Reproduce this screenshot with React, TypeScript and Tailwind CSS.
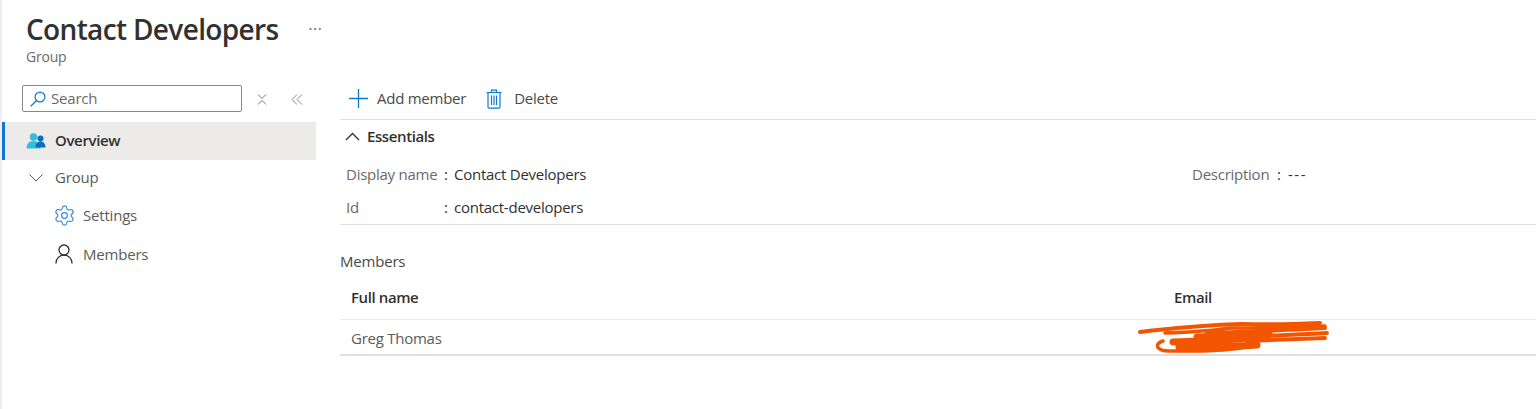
import { Ellipsis, Settings, UserRound } from "lucide-react";

const font = { fontFamily: '"Open Sans", "Noto Sans", sans-serif' };

function GroupIcon() {
  return (
    <svg width="20" height="18" viewBox="0 0 20 18">
      <circle cx="7.5" cy="5" r="3.8" fill="#32bedd" />
      <path d="M0.5 16.500c0-4.500 2.500-7.500 7-7.500s7 3 7 7.500z" fill="#32bedd" />
      <circle cx="14.500" cy="6.500" r="3" fill="#0f6cbd" />
      <path d="M9.500 15.500c0-3.500 1.800-6 5-6s5 2.500 5 6z" fill="#0f6cbd" />
    </svg>
  );
}

function SearchIcon() {
  return (
    <svg width="16" height="16" viewBox="0 0 16 16" fill="none" stroke="#0f78d4" strokeWidth="1.200">
      <circle cx="10" cy="6" r="4.900" />
      <path d="M6.500 9.500 1 15" strokeLinecap="round" />
    </svg>
  );
}

function CollapseIcon() {
  return (
    <svg width="10" height="13" viewBox="0 0 10 13" fill="none" stroke="#797775" strokeWidth="1">
      <path d="M1 1.500 5 5.500l4-4M1 11.500 5 7.500l4 4" />
    </svg>
  );
}

function DoubleLeftIcon() {
  return (
    <svg width="12" height="11" viewBox="0 0 12 11" fill="none" stroke="#8a8886" strokeWidth="1">
      <path d="M6 .5 1 5.500l5 5M11 .5 6 5.500l5 5" />
    </svg>
  );
}

function PlusIcon() {
  return (
    <svg width="19" height="19" viewBox="0 0 19 19" fill="none" stroke="#0f78d4" strokeWidth="1.300">
      <path d="M9.500 0v19M0 9.500h19" />
    </svg>
  );
}

function TrashIcon() {
  return (
    <svg width="16" height="20" viewBox="0 0 16 20" fill="none" stroke="#0f78d4" strokeWidth="1.200">
      <path d="M.5 3.500h15M5.500 3.500V1.200h5v2.300M2 3.500v14.500a1.200 1.200 0 0 0 1.200 1.200h9.600a1.200 1.200 0 0 0 1.200-1.200V3.500" />
      <path d="M5.500 6.500v9.500M8 6.500v9.500M10.500 6.500v9.500" />
    </svg>
  );
}

function Scribble() {
  return (
    <svg className="absolute left-[1137px] top-[318px]" width="194" height="38" viewBox="0 0 194 38" fill="none" stroke="#f25500" strokeLinecap="round" strokeLinejoin="round">
      <path d="M3 14C30 11 60 7 105 6c30 1 55 0 78-1" strokeWidth="4" />
      <path d="M28 15c30-1 45-2 65-5 30 0 60-1 95-2" strokeWidth="3.500" />
      <path d="M70 15c40-1 80-3 118-5M95 19c30-1 60-2 95-4M110 23c25-1 50-2 78-3" strokeWidth="4" />
      <path d="M26 23c-10 3-6 10 6 10 18 0 45 1 72-3" strokeWidth="3.500" />
      <path d="M36 24c30-1 60-2 95-6M42 29c25 0 50 0 78-2M60 19c30-1 50-2 72-3" strokeWidth="7" />
    </svg>
  );
}

export default function App() {
  return (
    <div className="relative flex h-[409px] w-[1536px] overflow-hidden bg-white text-[#323130]" style={font}>
      <div className="w-[2px] shrink-0 bg-[#eeeeee]" />
      <div className="flex min-w-0 flex-1 flex-col">
        <header className="h-[68px] pl-6 pt-[11px]">
          <div className="flex items-center">
            <h1 className="text-[28px] leading-9 font-semibold tracking-[-0.65px]">Contact Developers</h1>
            <Ellipsis className="ml-[29px] h-4 w-4 text-[#605e5c]" strokeWidth={1.2} />
          </div>
          <p className="pt-[1px] text-sm leading-[18px] tracking-[-0.2px] text-[#6b6a69]">Group</p>
        </header>

        <div className="flex flex-1">
          <aside className="w-[314px] shrink-0">
            <div className="flex h-[54px] items-start pt-[17px]">
              <div className="ml-5 flex h-[27px] w-[220px] items-center gap-[5px] rounded-[2px] border border-[#8a8886] pl-[7px]">
                <SearchIcon />
                <span className="text-[15px] tracking-[-0.2px] text-[#6b6a69]">Search</span>
              </div>
              <div className="ml-[15px] mt-[8px]"><CollapseIcon /></div>
              <div className="ml-[24px] mt-[9px]"><DoubleLeftIcon /></div>
            </div>
            <div className="flex h-[38px] items-center border-l-[3px] border-[#0f78d4] bg-[#edebe9] pb-[1px] pl-[21px]">
              <GroupIcon />
              <span className="ml-[9px] text-[15px] font-semibold tracking-[-0.35px]">Overview</span>
            </div>
            <div className="flex h-[35px] items-center pl-[27px] text-[#5c5b5a]">
              <svg width="14" height="8" viewBox="0 0 14 8" fill="none" stroke="#5c5b5a" strokeWidth="1">
                <path d="M.5 .5 7 7l6.500-6.500" />
              </svg>
              <span className="ml-[12px] text-[15px] tracking-[-0.2px]">Group</span>
            </div>
            <div className="flex h-[40px] items-center pl-[51px] text-[#5c5b5a]">
              <Settings className="h-[23px] w-[23px] text-[#2f86e0]" strokeWidth={1.2} />
              <span className="ml-[7px] text-[15px] tracking-[-0.2px]">Settings</span>
            </div>
            <div className="flex h-[38px] items-center pl-[50px] text-[#5c5b5a]">
              <UserRound className="h-[24px] w-[24px] text-[#323130]" strokeWidth={1.3} />
              <span className="ml-[7px] text-[15px] tracking-[-0.2px]">Members</span>
            </div>
          </aside>

          <main className="ml-6 flex-1">
            <div className="flex h-[52px] items-center border-b border-[#e1dfdd] pl-[9px] pt-[10px] text-[#4a4948]">
              <PlusIcon />
              <span className="ml-[9px] text-[15px] tracking-[-0.25px]">Add member</span>
              <div className="ml-[20px]"><TrashIcon /></div>
              <span className="ml-[12px] text-[15px] tracking-[-0.25px]">Delete</span>
            </div>

            <div className="h-[105px] border-b border-[#e1dfdd]">
              <div className="flex h-[33px] items-center pl-[5px]">
                <svg width="15" height="9" viewBox="0 0 15 9" fill="none" stroke="#323130" strokeWidth="1.300">
                  <path d="M1 8 7.500 1.500 14 8" />
                </svg>
                <span className="ml-[7px] text-[15px] font-semibold tracking-[-0.4px]">Essentials</span>
              </div>
              <div className="grid grid-cols-[98px_10px_738px_85px_auto] pl-[6px] pt-[5px] text-[15px] leading-[33px] tracking-[-0.25px]">
                <span className="text-[#6b6a69]">Display name</span>
                <span>:</span>
                <span>Contact Developers</span>
                <span className="text-[#6b6a69]">Description</span>
                <span>: &nbsp;<span className="tracking-[1.5px]">---</span></span>
                <span className="text-[#6b6a69]">Id</span>
                <span>:</span>
                <span className="col-span-3">contact-developers</span>
              </div>
            </div>

            <h2 className="h-[54px] pt-[26px] text-[15px] leading-5 tracking-[-0.2px] text-[#4a4948]">Members</h2>

            <div className="grid h-[41px] grid-cols-[823px_1fr] items-center border-b border-[#edebe9] pb-[4px] pl-[11px] text-[15px] font-semibold tracking-[-0.4px]">
              <span>Full name</span>
              <span>Email</span>
            </div>
            <div className="flex h-[36px] items-center border-b-2 border-[#e1dfdd] pl-[11px] pt-[2px] text-[15px] tracking-[-0.25px] text-[#5c5b5a]">
              Greg Thomas
            </div>
          </main>
        </div>
      </div>
      <Scribble />
    </div>
  );
}
